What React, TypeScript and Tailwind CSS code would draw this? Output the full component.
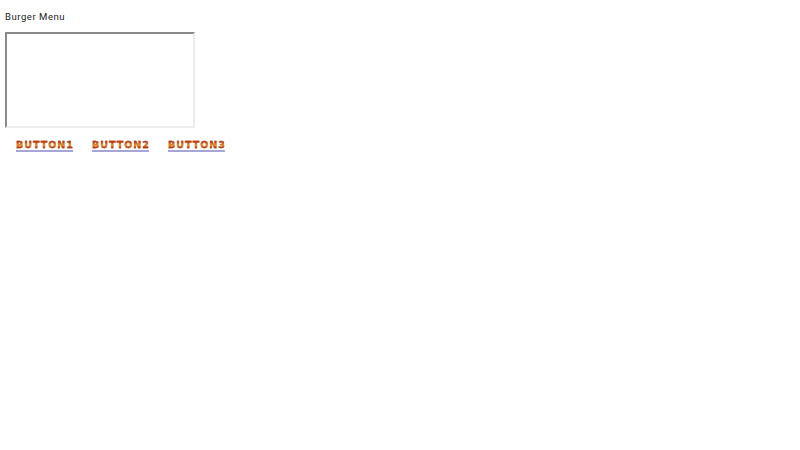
export default function App() {
  const buttons = ["BUTTON1", "BUTTON2", "BUTTON3"];
  return (
    <div className="h-[450px] w-[800px] overflow-hidden bg-white pl-[5px] pt-[11px] font-['DejaVu_Sans',sans-serif]">
      <div className="h-[12px] font-['Roboto',sans-serif] text-[9.5px] leading-[12px] tracking-[0.55px] text-[#222222]">Burger Menu</div>
      <div className="mt-[9px] h-[96px] w-[190px] border-2 border-t-[#8a8a8a] border-l-[#8a8a8a] border-r-[#ececec] border-b-[#ececec] bg-white" />
      <div className="mt-[11px] flex gap-[19px] pl-[11px]">
        {buttons.map((b) => (
          <div key={b} className="h-[13px] w-[57px] border-b-[2px] border-b-[#a5a5d8]">
            <span className="block bg-gradient-to-b from-[#b83a12] from-30% via-[#f7a020] via-55% to-[#9a2410] to-80% bg-clip-text text-[9.5px] font-bold leading-[11px] tracking-[1px] text-transparent [-webkit-text-stroke:0.3px_#c2481a]">
              {b}
            </span>
          </div>
        ))}
      </div>
    </div>
  );
}
